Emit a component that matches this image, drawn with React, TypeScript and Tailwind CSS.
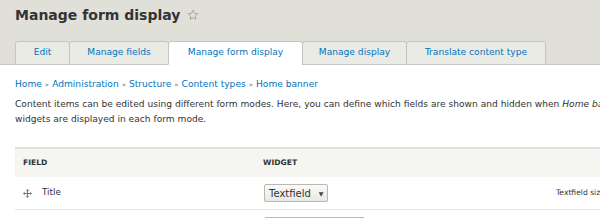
import React from 'react';

const tabs = [
  { label: 'Edit', w: 'w-[55px]' },
  { label: 'Manage fields', w: 'w-[100px]' },
  { label: 'Manage form display', w: 'w-[135px]', active: true },
  { label: 'Manage display', w: 'w-[105px]' },
  { label: 'Translate content type', w: 'w-[140px]' },
];

const crumbs = ['Home', 'Administration', 'Structure', 'Content types', 'Home banner'];

const DragIcon = () => (
  <svg width="9" height="9" viewBox="0 0 16 16" className="text-[#777]" fill="currentColor">
    <path d="M8 0 5 3h2v4H3V5L0 8l3 3V9h4v4H5l3 3 3-3H9V9h4v2l3-3-3-3v2H9V3h2z" />
  </svg>
);

const Star = () => (
  <svg width="12" height="12" viewBox="0 0 24 24" fill="none" stroke="#9a9a94" strokeWidth="1.6" strokeLinejoin="round">
    <path d="M12 2.5l2.9 6.1 6.6.8-4.9 4.6 1.3 6.6L12 17.3l-5.9 3.3 1.3-6.6-4.9-4.6 6.6-.8z" />
  </svg>
);

export default function App() {
  return (
    <div className="w-[600px] h-[218px] overflow-hidden bg-white font-['DejaVu_Sans',sans-serif] text-[#333]">
      {/* Header */}
      <div className="bg-[#e0e0d8] px-[15px] pt-[4px] border-b border-[#c5c5be]">
        <div className="flex items-center gap-[7px] h-[22px]">
          <h1 className="text-[14px] font-bold text-[#333] leading-none">Manage form display</h1>
          <Star />
        </div>
        <div className="flex mt-[15px] -mb-px">
          {tabs.map((t) => (
            <div
              key={t.label}
              className={`${t.w} h-[24px] flex items-center justify-center text-[9.1px] text-[#0074bd] border border-[#c5c5be] -ml-px first:ml-0 rounded-t-[3px] ${
                t.active ? 'bg-white border-b-white' : 'bg-[#ebebe6] border-b-[#c5c5be]'
              }`}
            >
              {t.label}
            </div>
          ))}
        </div>
      </div>

      {/* Content */}
      <div className="px-[15px] pt-[13px]">
        <div className="text-[9.1px] text-[#0074bd] leading-[12px]">
          {crumbs.map((c, i) => (
            <span key={c}>
              {i > 0 && <span className="text-[#777] text-[7px] px-[3px]">»</span>}
              {c}
            </span>
          ))}
        </div>
        <p className="text-[9.1px] leading-[15px] mt-[6px] whitespace-nowrap">
          Content items can be edited using different form modes. Here, you can define which fields are shown and hidden when <em>Home banner</em> content items are edited in each form mode.
          <br />
          widgets are displayed in each form mode.
        </p>

        <div className="mt-[20px] w-[600px]">
          <div className="flex items-center h-[30px] bg-[#f5f5f2] border-t-2 border-[#e2e2dc] text-[7.6px] font-bold text-[#333] uppercase">
            <div className="w-[248px] shrink-0 pl-[8px]">Field</div>
            <div>Widget</div>
          </div>
          <div className="flex items-center h-[33px] border-b border-[#e6e6e1] text-[8.8px]">
            <div className="w-[248px] shrink-0 pl-[8px] flex items-center gap-[10px]">
              <DragIcon />
              <span>Title</span>
            </div>
            <div className="w-[293px] shrink-0 pl-px">
              <div className="inline-flex items-center h-[18px] px-[4px] gap-[8px] border border-[#b8b8b0] rounded-[2px] bg-gradient-to-b from-[#fafaf8] to-[#e8e8e4] text-[10px] text-[#333]">
                Textfield
                <span className="text-[6px] text-[#444]">▼</span>
              </div>
            </div>
            <div className="text-[7.6px] whitespace-nowrap">Textfield size: 60</div>
          </div>
          <div className="pl-[249px] pt-[7px]">
            <div className="w-[101px] h-[17px] border border-[#b8b8b0] rounded-[2px] bg-[#f7f7f5]" />
          </div>
        </div>
      </div>
    </div>
  );
}
